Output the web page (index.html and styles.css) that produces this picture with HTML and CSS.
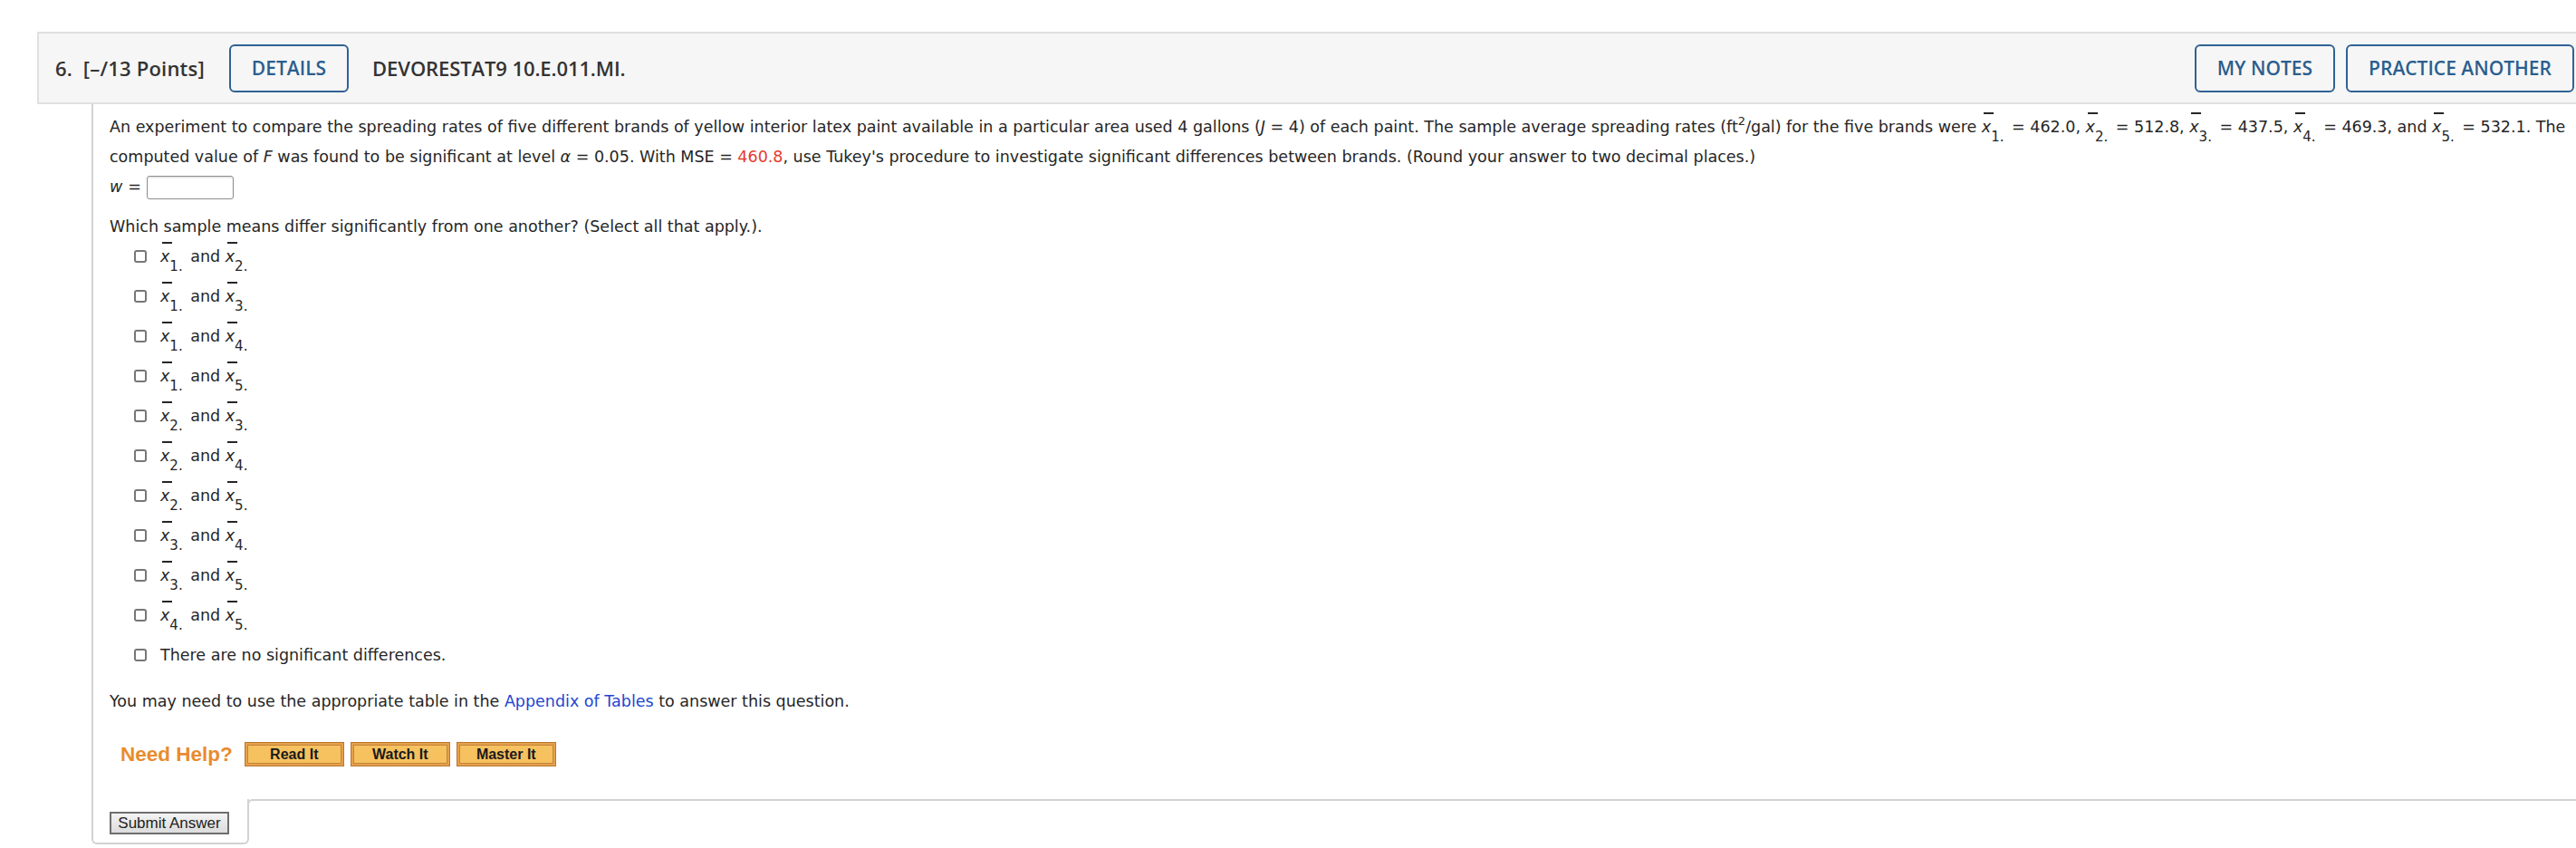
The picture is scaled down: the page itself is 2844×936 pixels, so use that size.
FILE: index.html
```html
<!DOCTYPE html>
<html lang="en">
<head>
<meta charset="utf-8">
<title>Question 6</title>
<link rel="stylesheet" href="styles.css">
</head>
<body>
<div class="question">
  <div class="qhead">
    <div class="qnum">6.&nbsp; [–/13 Points]</div>
    <button class="hbtn details">DETAILS</button>
    <div class="qid">DEVORESTAT9 10.E.011.MI.</div>
    <div class="spacer"></div>
    <button class="hbtn notes">MY NOTES</button>
    <button class="hbtn">PRACTICE ANOTHER</button>
  </div>
  <div class="qbody">
    <div class="content">
      <p class="para">An experiment to compare the spreading rates of five different brands of yellow interior latex paint available in a particular area used 4 gallons (<i>J</i> = 4) of each paint. The sample average spreading rates (ft<sup>2</sup>/gal) for the five brands were <span class="xb">x</span><sub>1.</sub> = 462.0, <span class="xb">x</span><sub>2.</sub> = 512.8, <span class="xb">x</span><sub>3.</sub> = 437.5, <span class="xb">x</span><sub>4.</sub> = 469.3, and <span class="xb">x</span><sub>5.</sub> = 532.1. The computed value of <i>F</i> was found to be significant at level <i>α</i> = 0.05. With MSE = <span class="red">460.8</span>, use Tukey's procedure to investigate significant differences between brands. (Round your answer to two decimal places.)</p>
      <div class="wline"><i>w</i> = <span class="inp"></span></div>
      <div class="which">Which sample means differ significantly from one another? (Select all that apply.).</div>
      <div class="opts">
        <div class="opt"><span class="cb"></span><span class="lbl"><span class="xb">x</span><sub>1.</sub> and <span class="xb">x</span><sub>2.</sub></span></div>
        <div class="opt"><span class="cb"></span><span class="lbl"><span class="xb">x</span><sub>1.</sub> and <span class="xb">x</span><sub>3.</sub></span></div>
        <div class="opt"><span class="cb"></span><span class="lbl"><span class="xb">x</span><sub>1.</sub> and <span class="xb">x</span><sub>4.</sub></span></div>
        <div class="opt"><span class="cb"></span><span class="lbl"><span class="xb">x</span><sub>1.</sub> and <span class="xb">x</span><sub>5.</sub></span></div>
        <div class="opt"><span class="cb"></span><span class="lbl"><span class="xb">x</span><sub>2.</sub> and <span class="xb">x</span><sub>3.</sub></span></div>
        <div class="opt"><span class="cb"></span><span class="lbl"><span class="xb">x</span><sub>2.</sub> and <span class="xb">x</span><sub>4.</sub></span></div>
        <div class="opt"><span class="cb"></span><span class="lbl"><span class="xb">x</span><sub>2.</sub> and <span class="xb">x</span><sub>5.</sub></span></div>
        <div class="opt"><span class="cb"></span><span class="lbl"><span class="xb">x</span><sub>3.</sub> and <span class="xb">x</span><sub>4.</sub></span></div>
        <div class="opt"><span class="cb"></span><span class="lbl"><span class="xb">x</span><sub>3.</sub> and <span class="xb">x</span><sub>5.</sub></span></div>
        <div class="opt"><span class="cb"></span><span class="lbl"><span class="xb">x</span><sub>4.</sub> and <span class="xb">x</span><sub>5.</sub></span></div>
        <div class="opt"><span class="cb"></span><span class="lbl">There are no significant differences.</span></div>
      </div>
      <div class="note">You may need to use the appropriate table in the <a class="link" href="#">Appendix of Tables</a> to answer this question.</div>
      <div class="help">
        <span class="needhelp">Need Help?</span>
        <button class="hb">Read It</button>
        <button class="hb">Watch It</button>
        <button class="hb">Master It</button>
      </div>
    </div>
    <div class="submitrow">
      <div class="submittab"><button class="submit">Submit Answer</button></div>
      <div class="submitline"></div>
    </div>
  </div>
</div>
</body>
</html>
```

FILE: styles.css
```css
* { box-sizing: border-box; }
html, body { margin: 0; padding: 0; background: #fff; }
body {
  width: 2844px;
  height: 936px;
  overflow: hidden;
  font-family: "DejaVu Sans", Verdana, sans-serif;
  color: #262626;
}
.question {
  margin: 35px 0 0 41px;
  width: 2812px;
}
.qhead {
  display: flex;
  align-items: center;
  height: 80px;
  background: #f6f6f6;
  border: 2px solid #e0e0e0;
  padding: 0 9px 0 18px;
  font-family: "Open Sans", sans-serif;
}
.qnum, .qid {
  font-weight: 600;
  font-size: 22px;
  color: #333;
  white-space: nowrap;
}
.qnum { letter-spacing: 0.2px; }
.qid { margin-left: 26px; letter-spacing: -0.1px; }
.hbtn {
  font-family: "Open Sans", sans-serif;
  font-weight: 600;
  font-size: 21px;
  color: #2b5e8e;
  background: transparent;
  border: 2px solid #2f6294;
  border-radius: 6px;
  height: 53px;
  padding: 0 23px;
  white-space: nowrap;
}
.details { margin-left: 27px; }
.notes { margin-right: 12px; }
.spacer { flex: 1; }

.qbody { margin-left: 60px; }
.content {
  border-left: 2px solid #d2d2d2;
  padding: 9px 0 36px 18px;
  font-size: 17.5px;
}
.para {
  margin: 0;
  line-height: 33px;
}
sup { font-size: 13px; line-height: 0; vertical-align: 8px; }
sub { font-size: 15px; line-height: 0; vertical-align: -10px; margin-right: 3px; }
.xb {
  font-style: italic;
  position: relative;
}
.xb::before {
  content: "";
  position: absolute;
  left: 2px;
  width: 11px;
  top: -6px;
  height: 2px;
  background: #262626;
}
.red { color: #e43a2f; }
.wline {
  line-height: 33px;
  display: flex;
  align-items: center;
  gap: 6px;
}
.inp {
  display: inline-block;
  width: 96px;
  height: 26px;
  border: 1px solid #8f8f8f;
  border-radius: 3px;
  box-shadow: inset 0 1px 2px rgba(0,0,0,0.15);
  background: #fff;
}
.which {
  line-height: 33px;
  margin-top: 11px;
}
.opts { margin-top: -6px; }
.opt {
  display: flex;
  align-items: center;
  height: 44px;
  padding-left: 27px;
}
.cb {
  width: 14px;
  height: 14px;
  border: 2px solid #777;
  border-radius: 3px;
  background: #fff;
  margin-right: 15px;
  flex: none;
}
.lbl { line-height: 20px; }
.note {
  line-height: 33px;
  margin-top: 13px;
}
.link { color: #2446d0; text-decoration: none; }
.help {
  display: flex;
  align-items: center;
  margin-top: 28px;
  padding-left: 12px;
  gap: 7px;
}
.needhelp {
  font-family: "Liberation Sans", Arial, sans-serif;
  font-weight: bold;
  font-size: 22.5px;
  color: #e98b2f;
  margin-right: 6px;
}
.hb {
  width: 110px;
  height: 27px;
  padding: 0;
  background: #f6c15f;
  border: 1px solid #b9772f;
  box-shadow: inset 0 0 0 2px #e6a04b, inset 0 0 0 3px #c4853a;
  font-family: "Liberation Sans Narrow", "Liberation Sans", Arial, sans-serif;
  font-weight: bold;
  font-size: 16px;
  color: #1a1a1a;
}
.submitrow { display: flex; }
.submittab {
  width: 174px;
  height: 50px;
  border: 2px solid #d2d2d2;
  border-top: none;
  border-radius: 0 0 6px 6px;
  padding: 14px 0 0 18px;
}
.submit {
  display: block;
  width: 132px;
  height: 25px;
  padding: 0;
  border: 2px solid #6e6e6e;
  background: linear-gradient(#f3f3f3, #dcdcdc);
  font-family: "Liberation Sans", Arial, sans-serif;
  font-size: 17px;
  color: #222;
}
.submitline {
  flex: 1;
  height: 12px;
  margin-left: -2px;
  border-top: 2px solid #d2d2d2;
  border-left: 2px solid #d2d2d2;
  border-top-left-radius: 6px;
}
```
